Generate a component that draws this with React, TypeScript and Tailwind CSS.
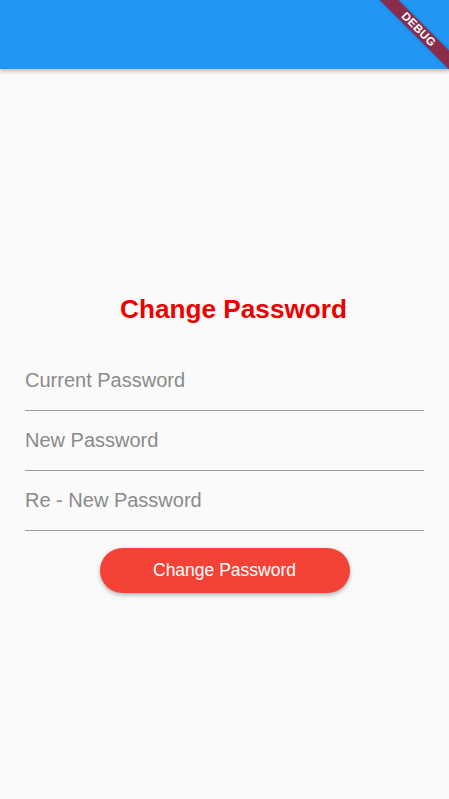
import React from 'react'

const fields = ['Current Password', 'New Password', 'Re - New Password']

const DebugBanner: React.FC = () => {
    return (
        <div className="pointer-events-none absolute top-0 right-0 z-20 h-[100px] w-[100px] overflow-hidden">
            <div className="absolute left-[0px] top-[23px] flex h-[13px] w-[160px] translate-x-[-10.5px] rotate-45 items-center justify-center bg-[#8a2c4a] shadow-[0_0_3px_rgba(0,0,0,0.3)]">
                <span className="text-[11.5px] leading-none font-black tracking-[0.3px] text-white">DEBUG</span>
            </div>
        </div>
    )
}

const App: React.FC = () => {
    return (
        <div className="relative min-h-[799px] w-full bg-[#fafafa] font-['Liberation_Sans',Arial,sans-serif]">
            <header className="relative z-10 h-[69px] w-full bg-[#2196F3] shadow-[0_2px_4px_rgba(0,0,0,0.28)]"></header>

            <main className="flex flex-col px-[25px] pt-[225px]">
                <h1 className="pl-[18px] text-center text-[26.2px] leading-[30px] font-bold text-[#ee0000]">Change Password</h1>

                <div className="mt-[27px] flex flex-col">
                    {fields.map((label) => (
                        <div key={label} className="h-[60px] border-b border-[#9b9b9b] pt-[17px]">
                            <input
                                type="password"
                                placeholder={label}
                                className="h-[24px] w-full bg-transparent text-[20px] leading-[24px] text-[#333] outline-none placeholder:text-[#8a8a8a]"
                            />
                        </div>
                    ))}
                </div>

                <div className="mt-[17px] flex justify-center">
                    <button className="h-[45px] w-[250px] rounded-full bg-[#F44336] text-[17.5px] text-white shadow-[0_2px_4px_rgba(0,0,0,0.3)]">
                        Change Password
                    </button>
                </div>
            </main>

            <DebugBanner />
        </div>
    )
}
export default App
